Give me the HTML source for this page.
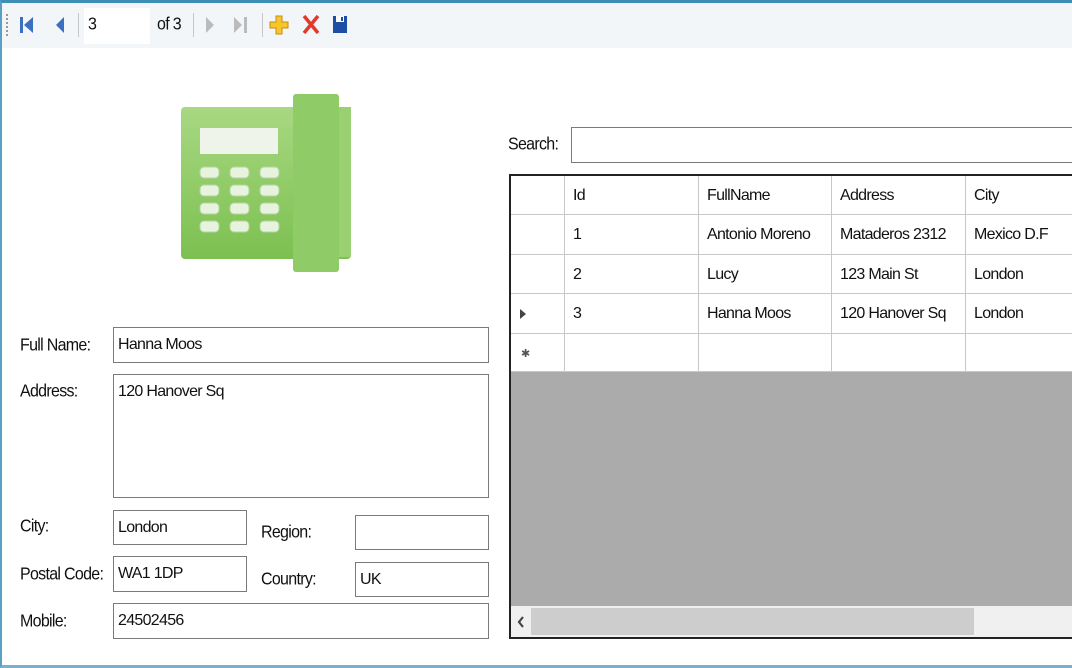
<!DOCTYPE html>
<html><head><meta charset="utf-8"><style>
*{box-sizing:border-box;margin:0;padding:0}
body{width:1072px;height:668px;overflow:hidden;background:#fff;font-family:"Liberation Sans",sans-serif;font-size:16px;color:#111;position:relative}
.frame{position:absolute;left:0;top:0;width:1072px;height:668px;border-top:3px solid #3d8fb5;border-left:2px solid #5aa0c4;border-bottom:3px solid #7ab0cc}
.tb{position:absolute;left:2px;top:3px;width:1070px;height:45px;background:#f3f6f9}
.a{position:absolute;white-space:nowrap;letter-spacing:-0.7px;transform-origin:left top;transform:scaleY(1.1)}
.in{position:absolute;border:1px solid #7a7a7a;background:#fff;padding:8px 0 0 4px;letter-spacing:-0.7px}
.sep{position:absolute;top:13px;width:1px;height:24px;background:#c8c8c8}
.grid{position:absolute;left:509px;top:174px;width:563px;height:465px;border:2px solid #222;border-right:none;background:#ababab}
.c{position:absolute;border-right:1px solid #c8c8c8;border-bottom:1px solid #c8c8c8;background:#fff;padding:11px 0 0 8px;letter-spacing:-0.7px}
</style></head><body>
<div class="tb"></div>
<div style="position:absolute;left:6px;top:14px;width:2px;height:22px;border-left:2px dotted #999"></div>
<svg style="position:absolute;left:18px;top:14px" width="60" height="22">
<rect x="2" y="3" width="3" height="16" fill="#3b6fc2"/><path d="M15 3 L6 11 L15 19Z" fill="#3b6fc2"/>
<path d="M46 3 L38 11 L46 19Z" fill="#3b6fc2"/></svg>
<div class="sep" style="left:78px"></div>
<div style="position:absolute;left:84px;top:8px;width:66px;height:36px;background:#fff"></div>
<div class="a" style="left:88px;top:15px">3</div>
<div class="a" style="left:157px;top:15px">of 3</div>
<div class="sep" style="left:193px"></div>
<svg style="position:absolute;left:200px;top:14px" width="60" height="22">
<path d="M6 3 L14 11 L6 19Z" fill="#bbb"/><path d="M34 3 L42 11 L34 19Z" fill="#bbb"/><rect x="44" y="3" width="3" height="16" fill="#bbb"/></svg>
<div class="sep" style="left:262px"></div>
<svg style="position:absolute;left:268px;top:13px" width="90" height="24">
<path d="M8 3h6v6h6v6h-6v6h-6v-6h-6v-6h6z" fill="#f6c62a" stroke="#c98d10" stroke-width="1"/>
<path d="M36 3 L50 20 M50 3 L36 20" stroke="#e23a2a" stroke-width="3.5"/>
<path d="M65 3h14v17h-14z" fill="#1d4ea5"/><rect x="68" y="3" width="8" height="6" fill="#fff"/><rect x="73" y="4" width="2" height="4" fill="#1d4ea5"/></svg>
<svg style="position:absolute;left:178px;top:92px" width="180" height="184">
<defs><linearGradient id="g" x1="0" y1="0" x2="0" y2="1"><stop offset="0" stop-color="#a8d882"/><stop offset="1" stop-color="#7cc050"/></linearGradient></defs>
<rect x="3" y="15" width="170" height="152" rx="4" fill="url(#g)"/>
<rect x="160" y="15" width="13" height="150" fill="#9bd072"/>
<rect x="115" y="2" width="46" height="178" rx="3" fill="#8fcb66"/>
<rect x="22" y="36" width="78" height="26" fill="#eef4ea"/>
<g fill="#e8f3df" stroke="#b5d4a0">
<rect x="22" y="75" width="19" height="11" rx="4"/><rect x="52" y="75" width="19" height="11" rx="4"/><rect x="82" y="75" width="19" height="11" rx="4"/>
<rect x="22" y="93" width="19" height="11" rx="4"/><rect x="52" y="93" width="19" height="11" rx="4"/><rect x="82" y="93" width="19" height="11" rx="4"/>
<rect x="22" y="111" width="19" height="11" rx="4"/><rect x="52" y="111" width="19" height="11" rx="4"/><rect x="82" y="111" width="19" height="11" rx="4"/>
<rect x="22" y="129" width="19" height="11" rx="4"/><rect x="52" y="129" width="19" height="11" rx="4"/><rect x="82" y="129" width="19" height="11" rx="4"/></g></svg>
<div class="a" style="left:20px;top:336px">Full Name:</div>
<div class="in" style="left:113px;top:327px;width:376px;height:36px">Hanna Moos</div>
<div class="a" style="left:20px;top:382px">Address:</div>
<div class="in" style="left:113px;top:374px;width:376px;height:124px">120 Hanover Sq</div>
<div class="a" style="left:20px;top:517px">City:</div>
<div class="in" style="left:113px;top:510px;width:134px;height:35px">London</div>
<div class="a" style="left:261px;top:523px">Region:</div>
<div class="in" style="left:355px;top:515px;width:134px;height:35px"></div>
<div class="a" style="left:20px;top:565px">Postal Code:</div>
<div class="in" style="left:113px;top:556px;width:134px;height:36px">WA1 1DP</div>
<div class="a" style="left:261px;top:570px">Country:</div>
<div class="in" style="left:355px;top:562px;width:134px;height:35px">UK</div>
<div class="a" style="left:20px;top:612px">Mobile:</div>
<div class="in" style="left:113px;top:603px;width:376px;height:36px">24502456</div>
<div class="a" style="left:508px;top:135px">Search:</div>
<div class="in" style="left:571px;top:127px;width:510px;height:36px"></div>
<div class="grid">
<div class="c" style="left:0;top:0;width:54px;height:39px"></div>
<div class="c" style="left:54px;top:0;width:134px;height:39px">Id</div>
<div class="c" style="left:188px;top:0;width:133px;height:39px">FullName</div>
<div class="c" style="left:321px;top:0;width:134px;height:39px">Address</div>
<div class="c" style="left:455px;top:0;width:120px;height:39px">City</div>
<div class="c" style="left:0;top:39px;width:54px;height:40px"></div>
<div class="c" style="left:54px;top:39px;width:134px;height:40px">1</div>
<div class="c" style="left:188px;top:39px;width:133px;height:40px">Antonio Moreno</div>
<div class="c" style="left:321px;top:39px;width:134px;height:40px">Mataderos 2312</div>
<div class="c" style="left:455px;top:39px;width:120px;height:40px">Mexico D.F</div>
<div class="c" style="left:0;top:79px;width:54px;height:39px"></div>
<div class="c" style="left:54px;top:79px;width:134px;height:39px">2</div>
<div class="c" style="left:188px;top:79px;width:133px;height:39px">Lucy</div>
<div class="c" style="left:321px;top:79px;width:134px;height:39px">123 Main St</div>
<div class="c" style="left:455px;top:79px;width:120px;height:39px">London</div>
<div class="c" style="left:0;top:118px;width:54px;height:40px;padding:13px 0 0 8px"><svg width="8" height="12"><path d="M1 1 L7 6 L1 11Z" fill="#444"/></svg></div>
<div class="c" style="left:54px;top:118px;width:134px;height:40px">3</div>
<div class="c" style="left:188px;top:118px;width:133px;height:40px">Hanna Moos</div>
<div class="c" style="left:321px;top:118px;width:134px;height:40px">120 Hanover Sq</div>
<div class="c" style="left:455px;top:118px;width:120px;height:40px">London</div>
<div class="c" style="left:0;top:158px;width:54px;height:38px;font-size:11px;padding:13px 0 0 10px;color:#555">✱</div>
<div class="c" style="left:54px;top:158px;width:134px;height:38px"></div>
<div class="c" style="left:188px;top:158px;width:133px;height:38px"></div>
<div class="c" style="left:321px;top:158px;width:134px;height:38px"></div>
<div class="c" style="left:455px;top:158px;width:120px;height:38px"></div>
<div style="position:absolute;left:0;top:430px;width:563px;height:31px;background:#f0f0f0"></div>
<div style="position:absolute;left:20px;top:432px;width:443px;height:27px;background:#cdcdcd"></div>
<svg style="position:absolute;left:5px;top:439px" width="10" height="14"><path d="M7 2 L3 7 L7 12" stroke="#444" stroke-width="2.2" fill="none"/></svg>
</div>
<div class="frame"></div>
</body></html>
